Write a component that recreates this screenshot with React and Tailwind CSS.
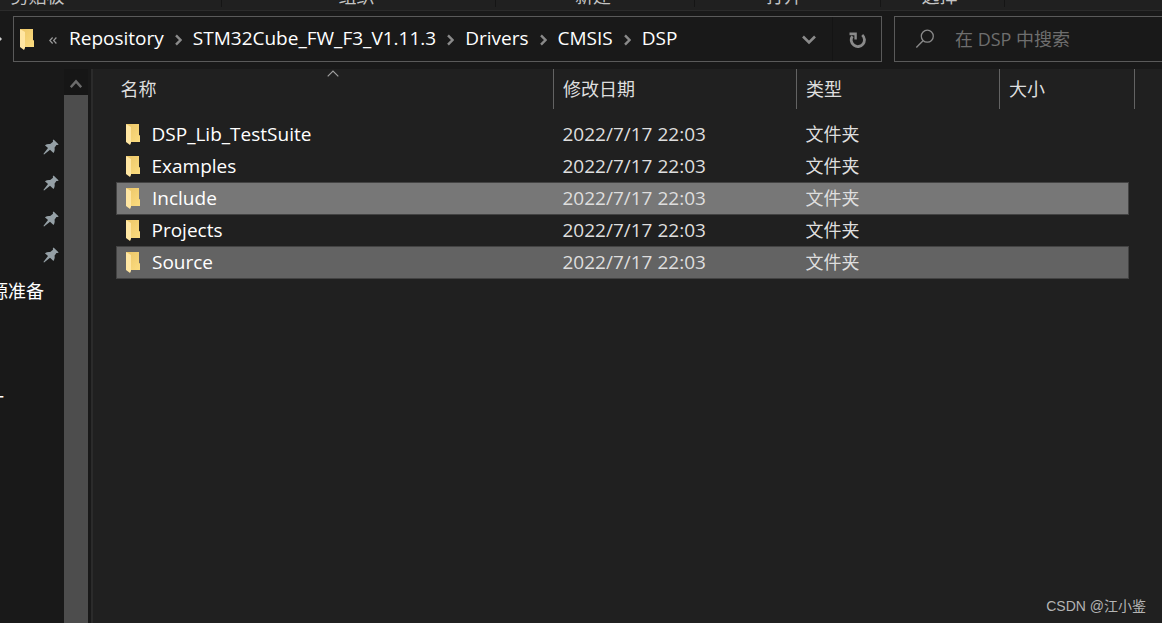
import { Fragment } from "react";

const ribbonGroups = [
  { label: "剪贴板", style: "w-[222px] pr-[146px] border-r" },
  { label: "组织", style: "w-[274px] pr-[4px] border-r" },
  { label: "新建", style: "w-[199px] pr-[4px] border-r" },
  { label: "打开", style: "w-[186px] pr-[7px] border-r" },
  { label: "选择", style: "w-[124px] pr-[6px] border-r" },
];

const crumbs = ["Repository", "STM32Cube_FW_F3_V1.11.3", "Drivers", "CMSIS", "DSP"];

const columns = [
  { label: "名称", sorted: true },
  { label: "修改日期" },
  { label: "类型" },
  { label: "大小", span: 2 },
];

const files = [
  { name: "DSP_Lib_TestSuite", fill: "" },
  { name: "Examples", fill: "" },
  { name: "Include", fill: "border-y border-[#434343] bg-[#777777] first:border-l last:border-r" },
  { name: "Projects", fill: "" },
  { name: "Source", fill: "border-y border-[#434343] bg-[#636363] first:border-l last:border-r" },
];

function FolderIcon() {
  return (
    <svg className="h-[22px] w-[15px] shrink-0" viewBox="0 0 15 22" aria-hidden="true">
      <defs>
        <linearGradient id="folderBack" x1="0" y1="0" x2="1" y2="1">
          <stop offset="0" stopColor="#ecc667" />
          <stop offset="1" stopColor="#fbdc80" />
        </linearGradient>
      </defs>
      <path d="M0 1H13V12L14 12.5V19H1V4Z" fill="url(#folderBack)" />
      <path d="M0 1L5 4V20L4 22L0 19Z" fill="#ffe6a2" />
    </svg>
  );
}

function PinIcon() {
  return (
    <svg className="h-4 w-4" viewBox="0 0 16 16" aria-hidden="true">
      <path
        d="M10.6 0.4L15.7 5.4L14.5 6.1L13.4 6L11.5 8.7C12 10.4 11.7 12.2 10.5 14L7 10.8L1.1 15.5L0.4 14.9L5 9L1.9 6.2C3.6 5 5.4 4.7 7.2 5L10 2.8L9.8 1.5Z"
        fill="#95a0a6"
      />
    </svg>
  );
}

function CrumbArrow() {
  return (
    <svg className="mt-1 h-[12px] w-[7px] shrink-0" viewBox="0 0 7 12" aria-hidden="true">
      <path d="M1 1.3L5.5 6L1 10.7" fill="none" stroke="#8a8a8a" strokeWidth="2.4" />
    </svg>
  );
}

export default function App() {
  return (
    <div className="relative flex min-h-screen flex-col overflow-hidden bg-[#191919] font-['Open_Sans','Noto_Sans_CJK_SC',sans-serif] text-[18px] leading-6 text-white">
      <div className="flex h-[11px] border-b border-[#2b2b2b] bg-[#202020]">
        {ribbonGroups.map((g) => (
          <div
            key={g.label}
            className={`flex h-[7px] shrink-0 items-end justify-center overflow-hidden border-[#151515] pb-px text-[#c4c4c4] ${g.style}`}
          >
            <span className="leading-5">{g.label}</span>
          </div>
        ))}
      </div>

      <div className="flex pt-[5px] pb-[7px]">
        <div className="flex w-[13px] shrink-0 items-center">
          <svg className="h-2 w-1" viewBox="0 0 4 8" aria-hidden="true">
            <path d="M0 2L2 4L0 6Z" fill="#d0d0d0" />
          </svg>
        </div>
        <nav aria-label="地址" className="flex h-[46px] min-w-0 flex-1 border border-[#5a5a5a]">
          <div className="flex min-w-0 flex-1 items-center pl-[6px]">
            <FolderIcon />
            <button type="button" aria-label="上级位置" className="ml-[14px] w-[8px]">
              <svg className="mt-[2px] h-[7px] w-[8px]" viewBox="0 0 8 7" aria-hidden="true">
                <path d="M3.6 0.5L0.8 3.5L3.6 6.5M7.4 0.5L4.6 3.5L7.4 6.5" fill="none" stroke="#9a9a9a" strokeWidth="1.2" />
              </svg>
            </button>
            <div className="ml-3 flex items-center gap-[11px] pb-0.5">
              {crumbs.map((c, i) => (
                <Fragment key={c}>
                  {i > 0 && <CrumbArrow />}
                  <button type="button" className="text-[19px] whitespace-nowrap">
                    {c}
                  </button>
                </Fragment>
              ))}
            </div>
          </div>
          <button type="button" aria-label="以前的位置" className="flex w-12 shrink-0 items-center justify-center border-r border-[#141414]">
            <svg className="mt-[2px] h-[10px] w-[14px]" viewBox="0 0 14 10" aria-hidden="true">
              <path d="M1 1.5L7 7.5L13 1.5" fill="none" stroke="#8a8a8a" strokeWidth="2.6" />
            </svg>
          </button>
          <button type="button" aria-label="刷新" className="flex w-12 shrink-0 items-center justify-center">
            <svg className="mt-[2px] h-[17px] w-[17px]" viewBox="0 0 17 17" aria-hidden="true">
              <path d="M13.2 3A6.6 6.6 0 1 1 3.4 4.2" fill="none" stroke="#8a8a8a" strokeWidth="2.8" />
              <path d="M0.5 0.6H7.8V7.6H5.4V3.2H0.5Z" fill="#8a8a8a" />
            </svg>
          </button>
        </nav>
        <label className="ml-3 flex h-[46px] w-[268px] shrink-0 items-center border border-r-0 border-[#5a5a5a] pl-[20px]">
          <svg className="h-5 w-5 shrink-0" viewBox="0 0 20 20" aria-hidden="true">
            <circle cx="12.3" cy="7.2" r="6" fill="none" stroke="#8a8a8a" strokeWidth="1.3" />
            <path d="M8 11.7L1.3 18.5" fill="none" stroke="#8a8a8a" strokeWidth="1.4" />
          </svg>
          <input
            type="search"
            aria-label="搜索"
            placeholder="在 DSP 中搜索"
            className="ml-5 w-full min-w-0 bg-transparent outline-none placeholder:text-[#6e6e6e]"
          />
        </label>
      </div>

      <div className="flex flex-1">
        <aside className="flex w-16 shrink-0 flex-col overflow-hidden pt-[60px]">
          {[1, 2, 3, 4].map((n) => (
            <div key={n} className="flex h-9 items-center justify-end pr-[5px]">
              <PinIcon />
            </div>
          ))}
          <div className="flex h-9 items-center justify-end pr-5 whitespace-nowrap">资源准备</div>
          <div className="mt-[70px] flex h-9 items-center justify-end pr-[60px] whitespace-nowrap">一</div>
        </aside>
        <div className="flex w-6 shrink-0 flex-col bg-[#4d4d4d]">
          <button type="button" aria-label="向上滚动" className="flex h-[26px] items-center justify-center bg-[#161616] pt-1">
            <svg className="h-[10px] w-[12px]" viewBox="0 0 12 10" aria-hidden="true">
              <path d="M0.8 8.2L6 2.4L11.2 8.2" fill="none" stroke="#6c6c6c" strokeWidth="2.4" />
            </svg>
          </button>
        </div>
        <main className="ml-[3px] min-w-0 flex-1 border-l-2 border-[#2b2b2b] bg-[#202020] pr-[27px] pl-[23px]">
          <table className="w-full table-fixed border-collapse text-left">
            <colgroup>
              <col />
              <col className="w-[243px]" />
              <col className="w-[203px]" />
              <col className="w-[129px]" />
              <col className="w-[6px]" />
            </colgroup>
            <thead>
              <tr className="h-10">
                {columns.map((c) => (
                  <th
                    key={c.label}
                    colSpan={c.span || 1}
                    className={`relative border-r border-[#636363] p-0 font-normal text-[#dedede] ${c.sorted ? "pl-[4px]" : "pl-[9px]"}`}
                  >
                    {c.label}
                    {c.sorted && (
                      <svg className="absolute top-px left-1/2 h-[7px] w-[12px] -translate-x-2" viewBox="0 0 12 7" aria-hidden="true">
                        <path d="M0.7 6.3L6 1L11.3 6.3" fill="none" stroke="#a0a0a0" strokeWidth="1.2" />
                      </svg>
                    )}
                  </th>
                ))}
              </tr>
            </thead>
            <tbody className="before:block before:h-[9px] before:content-['']">
              {files.map((f) => (
                <tr key={f.name} className="h-8 text-[#dedede]">
                  <td className={`p-0 pl-[9px] ${f.fill}`}>
                    <div className="flex items-center gap-[11px]">
                      <FolderIcon />
                      <span className="text-[19px] text-white">{f.name}</span>
                    </div>
                  </td>
                  <td className={`p-0 pl-[9px] text-[19px] ${f.fill}`}>2022/7/17 22:03</td>
                  <td className={`p-0 pl-[9px] ${f.fill}`}>文件夹</td>
                  <td className={`p-0 ${f.fill}`}></td>
                </tr>
              ))}
            </tbody>
          </table>
        </main>
      </div>

      <div className="absolute right-4 bottom-[5px] font-['Liberation_Sans','Noto_Sans_CJK_SC',sans-serif] text-[14px] text-[#b4b4b4]">
        CSDN @江小鉴
      </div>
    </div>
  );
}
